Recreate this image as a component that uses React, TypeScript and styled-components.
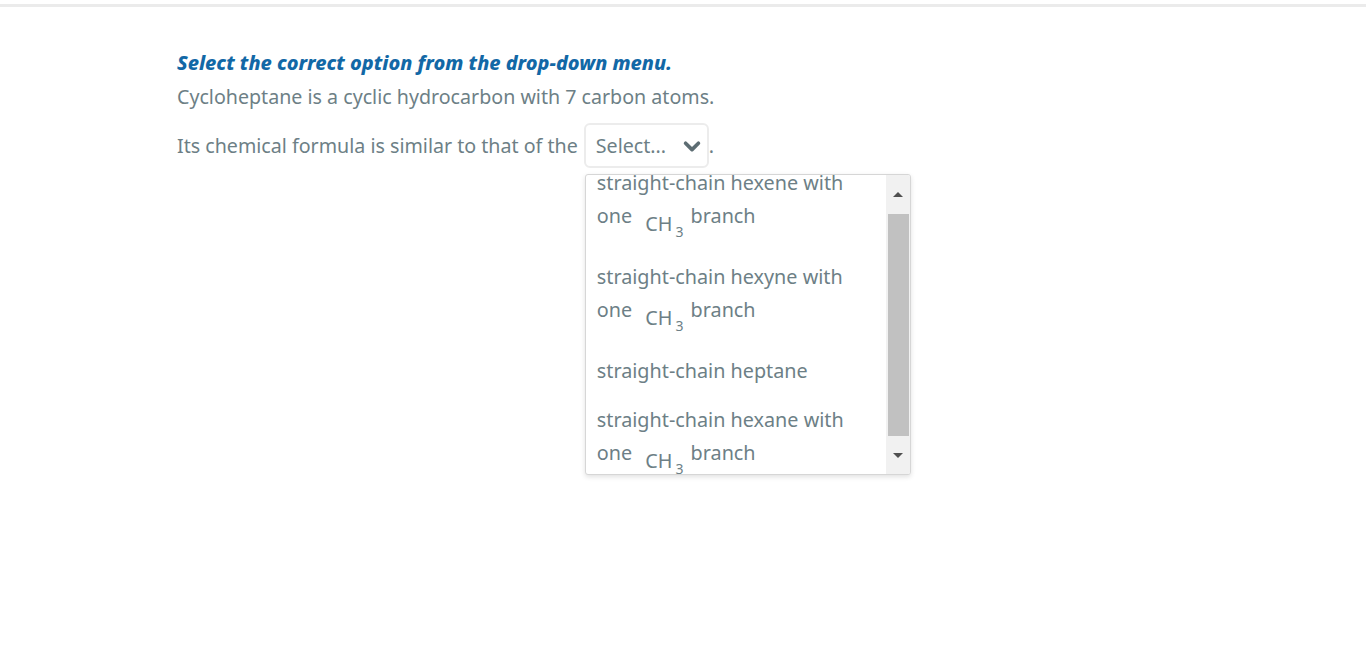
import React from 'react'
import styled, { createGlobalStyle } from 'styled-components'

const GlobalStyle = createGlobalStyle`
  html, body {
    margin: 0;
    padding: 0;
    background: #ffffff;
  }
  #root {
    min-height: 100vh;
  }
  body {
    font-family: 'Noto Sans', 'Open Sans', sans-serif;
    color: #6d7f86;
  }
`

const TopRule = styled.div`
  margin-top: 4px;
  height: 3px;
  background: #ebebeb;
`

const Main = styled.main`
  padding: 42px 0 0 177px;
`

const Prompt = styled.h2`
  margin: 0;
  font-size: 19.85px;
  line-height: 28px;
  font-weight: 800;
  font-style: italic;
  color: #1268a6;
`

const Text = styled.p`
  margin: 6px 0 0;
  font-size: 19.65px;
  line-height: 28px;
`

const Sentence = styled.div`
  margin-top: 12px;
  display: flex;
  align-items: center;
  font-size: 19.65px;
  line-height: 28px;
`

const SelectWrap = styled.div`
  position: relative;
  margin-left: 6px;
`

const SelectBox = styled.div`
  box-sizing: border-box;
  height: 45px;
  width: 125px;
  display: flex;
  align-items: center;
  justify-content: space-between;
  padding: 0 4px 0 10px;
  border: 2px solid #ececec;
  border-radius: 6px;
  background: #fff;
`

const Chevron = styled.svg`
  width: 22px;
  height: 22px;
`

const Menu = styled.div`
  position: absolute;
  top: 51px;
  left: 1px;
  box-sizing: border-box;
  width: 326px;
  height: 301px;
  display: flex;
  border: 1px solid #d6d6d6;
  border-radius: 3px;
  background: #fff;
  box-shadow: 0 2px 5px rgba(0, 0, 0, 0.12);
  overflow: hidden;
`

const Viewport = styled.div`
  flex: 1;
  overflow: hidden;
`

const List = styled.ul`
  list-style: none;
  margin: 0;
  padding: 0;
`

const Item = styled.li`
  padding: 8px 12px 8px 11px;
  font-size: 19.8px;
  line-height: 33px;
  white-space: nowrap;
`

const Formula = styled.span`
  display: inline-block;
  vertical-align: -8px;
  margin: 0 2px 0 8px;
  line-height: 24px;
`

const Sub = styled.span`
  font-size: 14px;
  vertical-align: -6px;
  margin-left: 3px;
`

const Scrollbar = styled.div`
  width: 24px;
  display: flex;
  flex-direction: column;
  background: #f1f1f1;
`

const ScrollButton = styled.div<{ $h: number }>`
  height: ${p => p.$h}px;
  display: flex;
  align-items: center;
  justify-content: center;
`

const Thumb = styled.div`
  flex: 1;
  margin: 0 1px 0 2px;
  background: #c1c1c1;
`

const Arrow = styled.span<{ $up?: boolean }>`
  width: 0;
  height: 0;
  border-left: 5px solid transparent;
  border-right: 5px solid transparent;
  ${p => (p.$up ? 'border-bottom: 5px solid #505050;' : 'border-top: 5px solid #505050;')}
`

const Ch3 = () => (
  <Formula>
    CH<Sub>3</Sub>
  </Formula>
)

const options: { first: string; branch: boolean }[] = [
  { first: 'straight-chain hexene with', branch: true },
  { first: 'straight-chain hexyne with', branch: true },
  { first: 'straight-chain heptane', branch: false },
  { first: 'straight-chain hexane with', branch: true },
]

export default function App() {
  // list is scrolled a little from the top
  const scrollTop = 17
  return (
    <>
      <GlobalStyle />
      <TopRule />
      <Main>
        <Prompt>Select the correct option from the drop-down menu.</Prompt>
        <Text>Cycloheptane is a cyclic hydrocarbon with 7 carbon atoms.</Text>
        <Sentence>
          Its chemical formula is similar to that of the
          <SelectWrap>
            <SelectBox>
              Select...
              <Chevron viewBox="0 0 24 24" fill="none" stroke="#5d6d73" strokeWidth={4} strokeLinecap="round" strokeLinejoin="round">
                <path d="M5 9l7 7 7-7" />
              </Chevron>
            </SelectBox>
            <Menu>
              <Viewport>
                <List style={{ marginTop: -scrollTop }}>
                  {options.map(o => (
                    <Item key={o.first}>
                      {o.first}
                      {o.branch && (
                        <>
                          <br />
                          one <Ch3 /> branch
                        </>
                      )}
                    </Item>
                  ))}
                </List>
              </Viewport>
              <Scrollbar>
                <ScrollButton $h={39}>
                  <Arrow $up />
                </ScrollButton>
                <Thumb />
                <ScrollButton $h={38}>
                  <Arrow />
                </ScrollButton>
              </Scrollbar>
            </Menu>
          </SelectWrap>
          .
        </Sentence>
      </Main>
    </>
  )
}
